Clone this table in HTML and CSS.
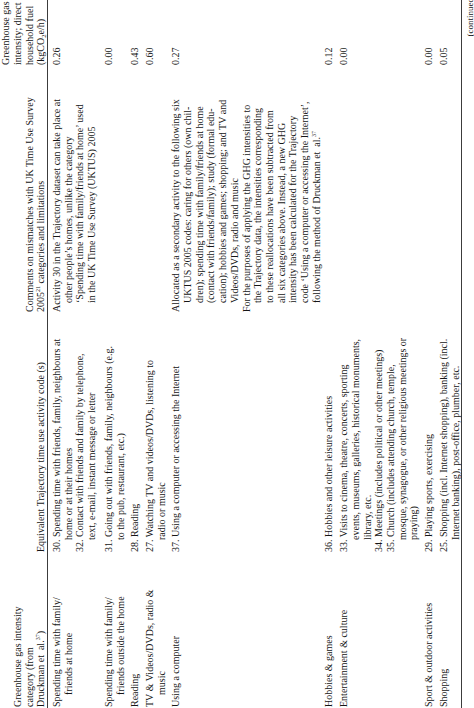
FILE: index.html
```html
<!DOCTYPE html>
<html lang="en">
<head>
<meta charset="utf-8">
<title>Greenhouse gas intensity table</title>
<link rel="stylesheet" href="styles.css">
</head>
<body>
<div class="page">
  <div class="table">
    <div class="head">
      <div class="cell c1">Greenhouse gas intensity<br>category (from<br>Druckman et&nbsp; al.<sup>37</sup>)</div>
      <div class="cell c2">Equivalent Trajectory time use activity code (s)</div>
      <div class="cell c3">Comments on mismatches with UK Time Use Survey<br>2005<sup>21</sup> categories and limitations</div>
      <div class="cell c4">Greenhouse gas<br>intensity; direct<br>household fuel<br>(kgCO<sub>2</sub>e/h)</div>
    </div>
    <div class="body">
      <div class="row">
        <div class="cell c1 hang">Spending time with family/<br>friends at home</div>
        <div class="cell c2">
          <div class="item">30. Spending time with friends, family, neighbours at<br>home or at their homes</div>
          <div class="item">32. Contact with friends and family by telephone,<br>text, e-mail, instant message or letter</div>
        </div>
        <div class="cell c3"><p class="note">Activity 30 in the Trajectory dataset can take place at<br>other people’s homes, unlike the category<br>‘Spending time with family/friends at home’ used<br>in the UK Time Use Survey (UKTUS) 2005</p></div>
        <div class="cell c4">0.26</div>
      </div>
      <div class="row after-wide">
        <div class="cell c1 hang">Spending time with family/<br>friends outside the home</div>
        <div class="cell c2"><div class="item">31. Going out with friends, family, neighbours (e.g.<br>to the pub, restaurant, etc.)</div></div>
        <div class="cell c3"></div>
        <div class="cell c4">0.00</div>
      </div>
      <div class="row">
        <div class="cell c1 hang">Reading</div>
        <div class="cell c2"><div class="item">28. Reading</div></div>
        <div class="cell c3"></div>
        <div class="cell c4">0.43</div>
      </div>
      <div class="row">
        <div class="cell c1 hang">TV &amp; Videos/DVDs, radio &amp;<br>music</div>
        <div class="cell c2"><div class="item">27. Watching TV and videos/DVDs, listening to<br>radio or music</div></div>
        <div class="cell c3"></div>
        <div class="cell c4">0.60</div>
      </div>
      <div class="row">
        <div class="cell c1 hang">Using a computer</div>
        <div class="cell c2"><div class="item">37. Using a computer or accessing the Internet</div></div>
        <div class="cell c3">
          <p class="note">Allocated as a secondary activity to the following six<br>UKTUS 2005 codes: caring for others (own chil-<br>dren); spending time with family/friends at home<br>(contact with friends/family); study (formal edu-<br>cation); hobbies and games; shopping; and TV and<br>Videos/DVDs, radio and music</p>
          <p class="note">For the purposes of applying the GHG intensities to<br>the Trajectory data, the intensities corresponding<br>to these reallocations have been subtracted from<br>all six categories above. Instead, a new GHG<br>intensity has been calculated for the Trajectory<br>code ‘Using a computer or accessing the Internet’,<br>following the method of Druckman et&nbsp; al.<sup>37</sup></p>
        </div>
        <div class="cell c4">0.27</div>
      </div>
      <div class="row after-tight">
        <div class="cell c1 hang">Hobbies &amp; games</div>
        <div class="cell c2"><div class="item">36. Hobbies and other leisure activities</div></div>
        <div class="cell c3"></div>
        <div class="cell c4">0.12</div>
      </div>
      <div class="row">
        <div class="cell c1 hang">Entertainment &amp; culture</div>
        <div class="cell c2">
          <div class="item">33. Visits to cinema, theatre, concerts, sporting<br>events, museums, galleries, historical monuments,<br>library, etc.</div>
          <div class="item">34. Meetings (includes political or other meetings)</div>
          <div class="item">35. Church (includes attending church, temple,<br>mosque, synagogue, or other religious meetings or<br>praying)</div>
        </div>
        <div class="cell c3"></div>
        <div class="cell c4">0.00</div>
      </div>
      <div class="row">
        <div class="cell c1 hang">Sport &amp; outdoor activities</div>
        <div class="cell c2"><div class="item">29. Playing sports, exercising</div></div>
        <div class="cell c3"></div>
        <div class="cell c4">0.00</div>
      </div>
      <div class="row">
        <div class="cell c1 hang">Shopping</div>
        <div class="cell c2"><div class="item">25. Shopping (incl. Internet shopping), banking (incl.<br>Internet banking), post-office, plumber, etc.</div></div>
        <div class="cell c3"></div>
        <div class="cell c4">0.05</div>
      </div>
    </div>
  </div>
  <div class="continued">(continued)</div>
</div>
</body>
</html>
```

FILE: styles.css
```css
html, body {
  margin: 0;
  padding: 0;
  background: #ffffff;
}

body {
  width: 474px;
  height: 708px;
  overflow: hidden;
}

.page {
  width: 708px;
  height: 474px;
  overflow: hidden;
  transform-origin: 0 0;
  transform: translateY(708px) rotate(-90deg);
  font-family: "Liberation Serif", "Times New Roman", serif;
  font-size: 10px;
  line-height: 11.7px;
  color: #161616;
  background: #ffffff;
}

.table {
  display: flex;
  flex-direction: column;
}

.head,
.row {
  display: grid;
  grid-template-columns: 156px 240px 247px 80px;
}

.head {
  height: 47px;
  border-bottom: 1px solid #3c3c3c;
  align-items: end;
}

.body {
  padding-top: 3px;
  border-bottom: 1px solid #3c3c3c;
  display: flex;
  flex-direction: column;
  gap: 3px;
}

.row.after-wide {
  margin-top: 2px;
}

.row.after-tight {
  margin-top: -2px;
}

.cell {
  white-space: nowrap;
}

.c1 {
  padding-left: 1px;
}

.hang {
  padding-left: 13px;
  text-indent: -12px;
}

.item {
  padding-left: 12px;
  text-indent: -12px;
}

.note {
  margin: 0;
  padding-left: 9px;
  text-indent: -9px;
}

sup {
  font-size: 6px;
  line-height: 0;
  vertical-align: 4px;
}

sub {
  font-size: 6.5px;
  line-height: 0;
  vertical-align: -2px;
}

.continued {
  text-align: right;
  margin-right: -5px;
  padding-top: 3px;
  font-size: 9px;
  line-height: 10px;
}
```
